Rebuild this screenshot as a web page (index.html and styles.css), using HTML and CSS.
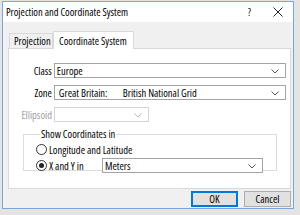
FILE: index.html
```html
<!DOCTYPE html>
<html>
<head>
<meta charset="utf-8">
<link rel="stylesheet" href="styles.css">
</head>
<body>
<div class="dialog">
  <div class="titlebar">
    <span class="title">Projection and Coordinate System</span>
    <span class="help">?</span>
    <svg class="close" width="10" height="10" viewBox="0 0 10 10"><path d="M0.5 0.5L9.5 9.5M9.5 0.5L0.5 9.5" stroke="#222" stroke-width="1"/></svg>
  </div>
  <div class="body">
    <div class="tabs">
      <div class="tab">Projection</div>
      <div class="tab active">Coordinate System</div>
    </div>
    <div class="panel">
      <div class="row row-class">
        <span class="label">Class</span>
        <div class="combo wide"><span>Europe</span><svg class="chev" width="8" height="5" viewBox="0 0 8 5"><path d="M0.5 0.5L4 4L7.5 0.5" fill="none" stroke="#555" stroke-width="1"/></svg></div>
      </div>
      <div class="row">
        <span class="label">Zone</span>
        <div class="combo wide"><span class="zone1">Great Britain:</span><span>British National Grid</span><svg class="chev" width="8" height="5" viewBox="0 0 8 5"><path d="M0.5 0.5L4 4L7.5 0.5" fill="none" stroke="#555" stroke-width="1"/></svg></div>
      </div>
      <div class="row">
        <span class="label disabled">Ellipsoid</span>
        <div class="combo small disabled"><span></span><svg class="chev" width="8" height="5" viewBox="0 0 8 5"><path d="M0.5 0.5L4 4L7.5 0.5" fill="none" stroke="#bbb" stroke-width="1"/></svg></div>
      </div>
      <fieldset class="group">
        <legend>Show Coordinates in</legend>
        <div class="radio-row">
          <span class="radio"></span><span>Longitude and Latitude</span>
        </div>
        <div class="radio-row">
          <span class="radio checked"></span><span class="xy">X and Y in</span>
          <div class="combo units"><span>Meters</span><svg class="chev" width="8" height="5" viewBox="0 0 8 5"><path d="M0.5 0.5L4 4L7.5 0.5" fill="none" stroke="#555" stroke-width="1"/></svg></div>
        </div>
      </fieldset>
    </div>
    <div class="buttons">
      <div class="btn default">OK</div>
      <div class="btn">Cancel</div>
    </div>
  </div>
</div>
</body>
</html>
```

FILE: styles.css
```css
html, body {
  margin: 0;
  padding: 0;
}
body {
  width: 300px;
  height: 215px;
  background: #e4e4e4;
  font-family: "Open Sans", "Noto Sans", sans-serif;
  font-stretch: 75%;
  font-size: 10.5px;
  color: #000;
  overflow: hidden;
}
.dialog {
  box-sizing: border-box;
  margin: 1px 0 0 2px;
  width: 292px;
  height: 208px;
  border: 1px solid #79a6d9;
  background: #f0f0f0;
  display: flex;
  flex-direction: column;
}
.titlebar {
  height: 20px;
  background: #fff;
  display: flex;
  align-items: center;
  padding: 0 10px 0 3px;
  flex: none;
}
.title {
  flex: 1;
}
.help {
  margin-right: 22px;
}
.close {
  display: block;
}
.body {
  flex: 1;
  display: flex;
  flex-direction: column;
  padding: 9px 2px 0 5px;
}
.tabs {
  display: flex;
  align-items: flex-end;
  height: 17px;
  padding-left: 1px;
  position: relative;
  z-index: 1;
}
.tab {
  box-sizing: border-box;
  height: 15px;
  padding: 0 4px;
  border: 1px solid #d9d9d9;
  border-bottom: none;
  background: #f0f0f0;
  display: flex;
  align-items: center;
  width: 44px;
  white-space: nowrap;
}
.tab.active {
  height: 18px;
  margin-bottom: -1px;
  background: #fff;
  width: 81px;
  padding-left: 5px;
}
.panel {
  box-sizing: border-box;
  height: 141px;
  width: 283px;
  background: #fff;
  border: 1px solid #d9d9d9;
  padding: 14px 4px 0 0;
  display: flex;
  flex-direction: column;
}
.row {
  display: flex;
  align-items: center;
  height: 15px;
  margin-bottom: 7px;
}
.label {
  width: 43px;
  text-align: right;
  padding-right: 1px;
}
.label.disabled {
  color: #a0a0a0;
}
.combo {
  box-sizing: border-box;
  height: 15px;
  border: 1px solid #a3a3a3;
  background: #fff;
  display: flex;
  align-items: center;
  padding: 0 0 0 2px;
  position: relative;
  margin-left: 1px;
  white-space: nowrap;
}
.combo.wide {
  width: 233px;
}
.combo.small {
  width: 95px;
}
.combo.disabled {
  border-color: #d4d4d4;
}
.zone1 {
  width: 64px;
  padding-left: 2px;
}
.chev {
  position: absolute;
  right: 6px;
  top: 5px;
}
.group {
  margin: -2px 0 0 14px;
  width: 254px;
  height: 44px;
  box-sizing: border-box;
  border: 1px solid #dcdcdc;
  padding: 1px 0 0 12px;
}
.group legend {
  padding: 0 1px;
  margin-left: 4px;
}
.radio-row {
  display: flex;
  align-items: center;
  height: 15px;
  margin-bottom: 1px;
  white-space: nowrap;
}
.radio {
  box-sizing: border-box;
  width: 11px;
  height: 11px;
  border: 1px solid #333;
  border-radius: 50%;
  margin-right: 2px;
  display: flex;
  align-items: center;
  justify-content: center;
}
.radio.checked::after {
  content: "";
  width: 5px;
  height: 5px;
  border-radius: 50%;
  background: #222;
}
.xy {
  width: 52px;
}
.combo.units {
  width: 161px;
}
.buttons {
  display: flex;
  justify-content: flex-end;
  gap: 6px;
  margin-top: 2px;
}
.btn {
  box-sizing: border-box;
  width: 47px;
  height: 16px;
  background: #e1e1e1;
  border: 1px solid #adadad;
  display: flex;
  align-items: center;
  justify-content: center;
}
.btn.default {
  border: 1px solid #0078d7;
  box-shadow: inset 0 0 0 1px #0078d7;
}
```
